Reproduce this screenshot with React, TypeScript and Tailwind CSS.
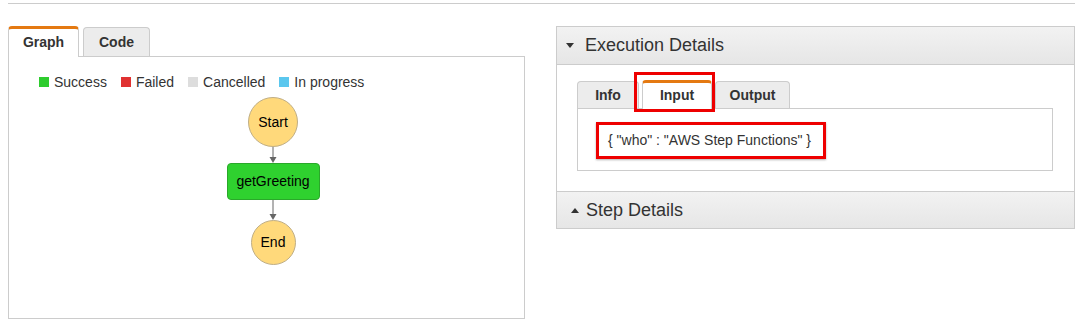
import React from 'react'
import { clsx } from 'clsx'

const legend = [
  { label: 'Success', color: 'bg-[#2ecc2e]' },
  { label: 'Failed', color: 'bg-[#e03131]' },
  { label: 'Cancelled', color: 'bg-[#dddddd]' },
  { label: 'In progress', color: 'bg-[#5bc7ee]' },
]

function Arrow({ h }: { h: number }) {
  return (
    <svg width="10" height={h} viewBox={`0 0 10 ${h}`} className="block">
      <line x1="5" y1="0" x2="5" y2={h - 4} stroke="#666" strokeWidth="1" />
      <path d={`M1.5 ${h - 6} L8.5 ${h - 6} L5 ${h} Z`} fill="#666" />
    </svg>
  )
}

function Caret({ up }: { up?: boolean }) {
  return (
    <svg width="8" height="5" viewBox="0 0 8 5" className="block">
      <path d={up ? 'M0 5 L8 5 L4 0 Z' : 'M0 0 L8 0 L4 5 Z'} fill="#333" />
    </svg>
  )
}

function Tab({ label, active, w, h }: { label: string; active?: boolean; w: string; h: string }) {
  return (
    <div
      className={clsx(
        'flex items-center justify-center border border-b-0 border-[#cccccc] rounded-t-[4px] text-[14px] font-bold text-[#333]',
        w,
        h,
        active
          ? 'relative z-10 -mb-px bg-white border-t-[3px] border-t-[#e47911] pb-[1px]'
          : 'bg-[#ececec]'
      )}
    >
      {label}
    </div>
  )
}

export default function App() {
  return (
    <div className="w-[1087px] h-[333px] bg-white pl-2 pr-3 pt-[3px] font-['Liberation_Sans',Arial,sans-serif] text-[#333]">
      <div className="border-t border-[#cccccc]" />

      <div className="flex items-start gap-[31px] mt-[22px]">
        {/* Graph panel */}
        <div className="w-[517px]">
          <div className="flex items-end gap-1">
            <Tab label="Graph" active w="w-[71px]" h="h-[31px]" />
            <Tab label="Code" w="w-[67px]" h="h-[29px]" />
          </div>
          <div className="h-[263px] border border-[#cccccc]">
            <div className="flex items-start gap-[14px] pl-[30px] pt-[15px] h-[40px] text-[14px] leading-5">
              {legend.map((l) => (
                <div key={l.label} className="flex items-center gap-[5px]">
                  <span className={clsx('block w-[10px] h-[10px]', l.color)} />
                  <span>{l.label}</span>
                </div>
              ))}
            </div>
            <div className="flex flex-col items-center w-[100px] ml-[214px] text-[14px] text-black">
              <div className="flex items-center justify-center w-[50px] h-[50px] rounded-full bg-[#ffd97b] border border-[#bfae86]">
                Start
              </div>
              <Arrow h={16} />
              <div className="flex items-center justify-center w-[93px] h-[37px] rounded-[4px] bg-[#2fd12f] border border-[#2aa82a]">
                getGreeting
              </div>
              <Arrow h={20} />
              <div className="flex items-center justify-center w-[45px] h-[45px] rounded-full bg-[#ffd97b] border border-[#bfae86]">
                End
              </div>
            </div>
          </div>
        </div>

        {/* Details panel */}
        <div className="w-[519px] border border-[#cccccc]">
          <div className="flex items-center gap-[11px] h-[38px] pl-[9px] border-b border-[#cccccc] bg-gradient-to-b from-[#f2f2f2] to-[#e6e6e6] text-[18px]">
            <Caret />
            <span>Execution Details</span>
          </div>
          <div className="pt-[15px] pb-[20px] pl-[20px] pr-[21px]">
            <div className="flex items-end gap-[3px]">
              <Tab label="Info" w="w-[62px]" h="h-[27px]" />
              <div className="relative">
                <Tab label="Input" active w="w-[70px]" h="h-[29px]" />
                <span className="absolute left-[-8px] top-[-8px] w-[81px] h-[40px] border-[3px] border-[#ee0000] z-20 pointer-events-none" />
              </div>
              <Tab label="Output" w="w-[75px]" h="h-[27px]" />
            </div>
            <div className="h-[63px] border border-[#cccccc] pl-[18px] pt-[13px]">
              <div className="inline-flex items-center h-[37px] border-[3px] border-[#ee0000] pl-[9px] pr-[12px] text-[14px] shadow-[0_1px_2px_rgba(0,0,0,0.3)]">
                {'{ "who" : "AWS Step Functions" }'}
              </div>
            </div>
          </div>
          <div className="flex items-center gap-[7px] h-[37px] pl-[14px] border-t border-[#cccccc] bg-gradient-to-b from-[#f2f2f2] to-[#e6e6e6] text-[18px]">
            <Caret up />
            <span>Step Details</span>
          </div>
        </div>
      </div>
    </div>
  )
}
